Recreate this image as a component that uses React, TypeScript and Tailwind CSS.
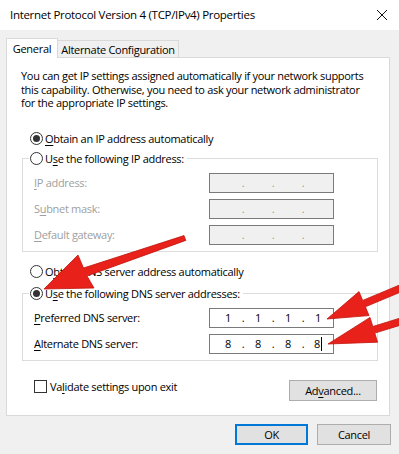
import { ReactNode } from 'react';

function Radio({ checked }: { checked?: boolean }) {
  return (
    <span className="w-[13px] h-[13px] rounded-full border border-[#333333] bg-white flex items-center justify-center shrink-0">
      {checked && <span className="w-[7px] h-[7px] rounded-full bg-[#333333]" />}
    </span>
  );
}

function Key({ children }: { children: ReactNode }) {
  return <span className="underline underline-offset-[2px]">{children}</span>;
}

function IpBox({ values, disabled, cursor }: { values?: string[]; disabled?: boolean; cursor?: boolean }) {
  const segs = values ?? ['', '', '', ''];
  return (
    <div
      className={`w-[125px] h-[20px] border flex items-center pl-[3px] ${
        disabled ? 'bg-[#f0f0f0] border-[#7a7a7a] text-[#9a9a9a]' : 'bg-white border-[#7a7a7a] text-black'
      }`}
    >
      {segs.map((v, i) => (
        <div key={i} className="flex items-center">
          <span className="w-[30px] flex justify-center items-center">
            {v}
            {cursor && i === 3 && <span className="w-[1px] h-[14px] bg-black ml-[1px]" />}
          </span>
          {i < 3 && <span className="w-0 flex justify-center">.</span>}
        </div>
      ))}
    </div>
  );
}

function FieldRow({ label, children, disabled }: { label: ReactNode; children: ReactNode; disabled?: boolean }) {
  return (
    <div className="flex items-center justify-between h-[20px] pl-[11px] pr-[43px]">
      <span className={disabled ? 'text-[#a0a0a0]' : 'text-black'}>{label}</span>
      {children}
    </div>
  );
}

export default function App() {
  return (
    <div className="w-[399px] h-[454px] bg-[#f0f0f0] relative overflow-hidden font-['Segoe_UI','Open_Sans',sans-serif] text-[11px] tracking-[-0.3px] text-black leading-none">
      {/* Title bar */}
      <div className="h-[30px] bg-white flex items-center justify-between pl-[10px] pr-[10px]">
        <span className="text-[11.5px]">Internet Protocol Version 4 (TCP/IPv4) Properties</span>
        <svg width="12" height="12" viewBox="0 0 12 12" className="mr-[1px]">
          <path d="M1 1 L11 11 M11 1 L1 11" stroke="#111" strokeWidth="1" />
        </svg>
      </div>

      <div className="px-[6px] pt-[8px]">
        {/* Tabs */}
        <div className="flex items-end">
          <div className="relative z-10 -mb-[1px] w-[52px] h-[20px] bg-white border border-b-0 border-[#d9d9d9] flex items-center justify-center">
            General
          </div>
          <div className="w-[121px] h-[17px] bg-[#f0f0f0] border border-b-0 border-l-0 border-[#d9d9d9] flex items-center justify-center">
            Alternate Configuration
          </div>
        </div>

        {/* Panel */}
        <div className="w-[384px] h-[359px] bg-white border border-[#d9d9d9] flex flex-col">
          <p className="mt-[11px] pl-[14px] leading-[13.5px] whitespace-nowrap">
            You can get IP settings assigned automatically if your network supports
            <br />
            this capability. Otherwise, you need to ask your network administrator
            <br />
            for the appropriate IP settings.
          </p>

          <div className="mt-[19px] h-[20px] flex items-center gap-[2px] pl-[23px]">
            <Radio checked />
            <span>
              <Key>O</Key>btain an IP address automatically
            </span>
          </div>

          <fieldset className="ml-[15px] w-[356px] border border-[#dcdcdc] p-0 m-0 min-w-0">
            <legend className="ml-[6px] pl-[1px] pr-[3px] h-[20px] flex items-center gap-[2px]">
              <Radio />
              <span>
                U<Key>s</Key>e the following IP address:
              </span>
            </legend>
            <div className="flex flex-col gap-[6px] mt-[4px] pb-[6px]">
              <FieldRow disabled label={<><Key>I</Key>P address:</>}>
                <IpBox disabled />
              </FieldRow>
              <FieldRow disabled label={<>S<Key>u</Key>bnet mask:</>}>
                <IpBox disabled />
              </FieldRow>
              <FieldRow disabled label={<><Key>D</Key>efault gateway:</>}>
                <IpBox disabled />
              </FieldRow>
            </div>
          </fieldset>

          <div className="mt-[10px] h-[20px] flex items-center gap-[2px] pl-[23px]">
            <Radio />
            <span>
              O<Key>b</Key>tain DNS server address automatically
            </span>
          </div>

          <fieldset className="mt-[2px] ml-[15px] w-[356px] border border-[#dcdcdc] p-0 min-w-0">
            <legend className="ml-[6px] pl-[1px] pr-[3px] h-[20px] flex items-center gap-[2px]">
              <Radio checked />
              <span>
                U<Key>s</Key>e the following DNS server addresses:
              </span>
            </legend>
            <div className="flex flex-col gap-[6px] mt-[4px] pb-[6px]">
              <FieldRow label={<><Key>P</Key>referred DNS server:</>}>
                <IpBox values={['1', '1', '1', '1']} />
              </FieldRow>
              <FieldRow label={<><Key>A</Key>lternate DNS server:</>}>
                <IpBox values={['8', '8', '8', '8']} cursor />
              </FieldRow>
            </div>
          </fieldset>

          <div className="mt-[19px] flex items-start justify-between pl-[27px] pr-[12px]">
            <div className="flex items-center gap-[3px] h-[13px]">
              <span className="w-[13px] h-[13px] border border-[#333333] bg-white" />
              <span>
                Va<Key>l</Key>idate settings upon exit
              </span>
            </div>
            <button className="w-[88px] h-[21px] bg-[#e1e1e1] border border-[#adadad] flex items-center justify-center">
              Ad<Key>v</Key>anced...
            </button>
          </div>
        </div>

        {/* Dialog buttons */}
        <div className="mt-[8px] flex justify-end gap-[9px] pr-[2px]">
          <button className="w-[73px] h-[21px] bg-[#e1e1e1] border-2 border-[#0078d7] flex items-center justify-center">
            OK
          </button>
          <button className="w-[74px] h-[21px] bg-[#e1e1e1] border border-[#adadad] flex items-center justify-center">
            Cancel
          </button>
        </div>
      </div>

      {/* Red annotation arrows */}
      <svg className="absolute inset-0 pointer-events-none" width="399" height="454" viewBox="0 0 399 454">
        <g fill="#e8221a" stroke="#c0140e" strokeWidth="0.8" strokeLinejoin="round">
          <polygon points="184,235.6 185.8,240.4 87,276 94,288 44,289 78,255 83.5,268" />
          <polygon points="327,319 369,315.6 365.4,306.8 411.3,287.6 408.7,281.2 362.7,300.4 359,291.6" />
          <polygon points="328,344 377.6,342.2 374.8,333.1 415,320.7 413,314.1 372.8,326.5 370,317.4" />
        </g>
      </svg>
    </div>
  );
}
